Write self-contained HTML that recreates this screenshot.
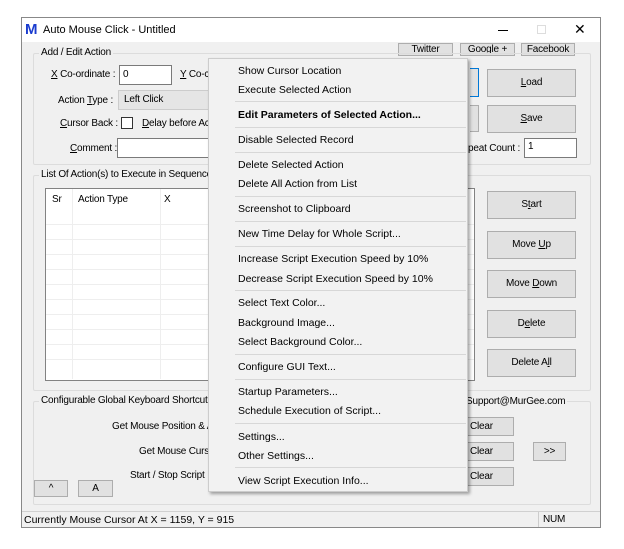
<!DOCTYPE html>
<html><head><style>
*{margin:0;padding:0;box-sizing:border-box}
body{width:624px;height:549px;background:#fff;position:relative;font-family:"Liberation Sans",sans-serif;font-size:10px;letter-spacing:-0.2px;color:#000;overflow:hidden}
.a{position:absolute;white-space:nowrap}
.win{position:absolute;left:21px;top:17px;width:580px;height:511px;border:1px solid #888;background:#f0f0f0}
.title{position:absolute;left:21px;top:17px;width:580px;height:25px;background:#fff;border:1px solid #888;border-bottom:none}
.gb{position:absolute;border:1px solid #dcdcdc;border-radius:2px}
.gl{position:absolute;background:#f0f0f0;padding:0 2px;top:-7px;left:5px}
.btn{position:absolute;background:#e1e1e1;border:1px solid #adadad;text-align:center}
.inp{position:absolute;background:#fff;border:1px solid #7a7a7a}
.menu{position:absolute;left:208px;top:58px;width:260px;height:434px;background:#f2f2f2;border:1px solid #ccc;box-shadow:2px 2px 3px rgba(0,0,0,.35);letter-spacing:0}
.mi{position:absolute;left:29px;font-size:10.5px}
.sep{position:absolute;left:26px;width:231px;height:1px;background:#d7d7d7}
</style></head><body>
<div class="win"></div>
<div class="title"></div>
<div class="a" style="left:25px;top:21px;font:bold 15px 'Liberation Sans';color:#1a3ccf">M</div>
<div class="a" style="left:43px;top:24px;font-size:11px;letter-spacing:0">Auto Mouse Click - Untitled</div>
<div class="a" style="left:498px;top:30px;width:10px;height:1px;background:#000"></div>
<div class="a" style="left:537px;top:25px;width:9px;height:9px;border:1px solid #ddd"></div>
<div class="a" style="left:574px;top:21px;font-size:14px">✕</div>

<div class="btn" style="left:398px;top:43px;width:55px;height:13px;line-height:11px">Twitter</div>
<div class="btn" style="left:460px;top:43px;width:55px;height:13px;line-height:11px">Google +</div>
<div class="btn" style="left:521px;top:43px;width:54px;height:13px;line-height:11px">Facebook</div>

<div class="gb" style="left:33px;top:53px;width:558px;height:112px"><span class="gl">Add / Edit Action</span></div>
<div class="a" style="left:51px;top:69px"><u>X</u> Co-ordinate :</div>
<div class="inp" style="left:119px;top:65px;width:53px;height:20px;padding:3px"><span>0</span></div>
<div class="a" style="left:180px;top:69px"><u>Y</u> Co-c</div>
<div class="a" style="left:58px;top:95px">Action <u>T</u>ype :</div>
<div class="a" style="left:118px;top:90px;width:95px;height:20px;background:#e5e5e5;border:1px solid #ccc;padding:3px 5px">Left Click</div>
<div class="a" style="left:60px;top:118px"><u>C</u>ursor Back :</div>
<div class="a" style="left:121px;top:117px;width:12px;height:12px;border:1px solid #333;background:#fff"></div>
<div class="a" style="left:142px;top:118px"><u>D</u>elay before Ac</div>
<div class="a" style="left:70px;top:143px"><u>C</u>omment :</div>
<div class="inp" style="left:117px;top:138px;width:95px;height:20px"></div>
<div class="a" style="left:470px;top:68px;width:9px;height:29px;border:1px solid #0078d7;border-left:none;background:#e1e1e1"></div>
<div class="a" style="left:470px;top:105px;width:9px;height:27px;border:1px solid #adadad;border-left:none;background:#e1e1e1"></div>
<div class="btn" style="left:487px;top:69px;width:89px;height:28px;line-height:26px"><u>L</u>oad</div>
<div class="btn" style="left:487px;top:105px;width:89px;height:28px;line-height:26px"><u>S</u>ave</div>
<div class="a" style="left:468px;top:143px">peat Count :</div>
<div class="inp" style="left:524px;top:138px;width:53px;height:20px;padding:2px 3px">1</div>

<div class="gb" style="left:33px;top:175px;width:558px;height:216px"><span class="gl">List Of Action(s) to Execute in Sequence</span></div>
<div class="a" style="left:45px;top:188px;width:430px;height:193px;background:#fff;border:1px solid #828282"></div>
<div class="a" style="left:52px;top:194px">Sr</div>
<div class="a" style="left:78px;top:194px">Action Type</div>
<div class="a" style="left:164px;top:194px">X</div>
<div class="a" style="left:72px;top:189px;width:1px;height:190px;background:#eee"></div>
<div class="a" style="left:160px;top:189px;width:1px;height:190px;background:#eee"></div>
<div class="a" style="left:46px;top:224px;width:428px;height:150px;background:repeating-linear-gradient(to bottom,#eee 0 1px,transparent 1px 15px)"></div>
<div class="btn" style="left:487px;top:191px;width:89px;height:28px;line-height:26px">S<u>t</u>art</div>
<div class="btn" style="left:487px;top:231px;width:89px;height:28px;line-height:26px">Move <u>U</u>p</div>
<div class="btn" style="left:487px;top:270px;width:89px;height:28px;line-height:26px">Move <u>D</u>own</div>
<div class="btn" style="left:487px;top:310px;width:89px;height:28px;line-height:26px">D<u>e</u>lete</div>
<div class="btn" style="left:487px;top:349px;width:89px;height:28px;line-height:26px">Delete A<u>l</u>l</div>

<div class="gb" style="left:33px;top:401px;width:558px;height:104px"><span class="gl">Configurable Global Keyboard Shortcut K</span></div>
<div class="a" style="left:464px;top:396px;background:#f0f0f0;padding:0 2px">Support@MurGee.com</div>
<div class="a" style="left:112px;top:421px">Get Mouse Position &amp; A</div>
<div class="a" style="left:139px;top:446px">Get Mouse Cursc</div>
<div class="a" style="left:130px;top:470px">Start / Stop Script</div>
<div class="btn" style="left:465px;top:417px;width:49px;height:19px;line-height:17px;text-align:left;padding-left:4px">Clear</div>
<div class="btn" style="left:465px;top:442px;width:49px;height:19px;line-height:17px;text-align:left;padding-left:4px">Clear</div>
<div class="btn" style="left:465px;top:467px;width:49px;height:19px;line-height:17px;text-align:left;padding-left:4px">Clear</div>
<div class="btn" style="left:533px;top:442px;width:33px;height:19px;line-height:17px">&gt;&gt;</div>
<div class="btn" style="left:34px;top:480px;width:34px;height:17px;line-height:15px">^</div>
<div class="btn" style="left:78px;top:480px;width:35px;height:17px;line-height:15px">A</div>

<div class="a" style="left:22px;top:511px;width:578px;height:1px;background:#d0d0d0"></div>
<div class="a" style="left:24px;top:514px;font-size:10.5px;letter-spacing:0">Currently Mouse Cursor At X = 1159, Y = 915</div>
<div class="a" style="left:538px;top:512px;width:1px;height:15px;background:#ccc"></div>
<div class="a" style="left:543px;top:514px">NUM</div>

<div class="menu">
<div class="mi" style="top:6px">Show Cursor Location</div>
<div class="mi" style="top:25px">Execute Selected Action</div>
<div class="sep" style="top:42px"></div>
<div class="mi" style="top:50px;font-weight:bold">Edit Parameters of Selected Action...</div>
<div class="sep" style="top:68px"></div>
<div class="mi" style="top:75px">Disable Selected Record</div>
<div class="sep" style="top:93px"></div>
<div class="mi" style="top:100px">Delete Selected Action</div>
<div class="mi" style="top:119px">Delete All Action from List</div>
<div class="sep" style="top:137px"></div>
<div class="mi" style="top:144px">Screenshot to Clipboard</div>
<div class="sep" style="top:162px"></div>
<div class="mi" style="top:169px">New Time Delay for Whole Script...</div>
<div class="sep" style="top:187px"></div>
<div class="mi" style="top:194px">Increase Script Execution Speed by 10%</div>
<div class="mi" style="top:214px">Decrease Script Execution Speed by 10%</div>
<div class="sep" style="top:231px"></div>
<div class="mi" style="top:238px">Select Text Color...</div>
<div class="mi" style="top:258px">Background Image...</div>
<div class="mi" style="top:277px">Select Background Color...</div>
<div class="sep" style="top:295px"></div>
<div class="mi" style="top:302px">Configure GUI Text...</div>
<div class="sep" style="top:320px"></div>
<div class="mi" style="top:327px">Startup Parameters...</div>
<div class="mi" style="top:346px">Schedule Execution of Script...</div>
<div class="sep" style="top:364px"></div>
<div class="mi" style="top:372px">Settings...</div>
<div class="mi" style="top:391px">Other Settings...</div>
<div class="sep" style="top:408px"></div>
<div class="mi" style="top:416px">View Script Execution Info...</div>
</div>
</body></html>
